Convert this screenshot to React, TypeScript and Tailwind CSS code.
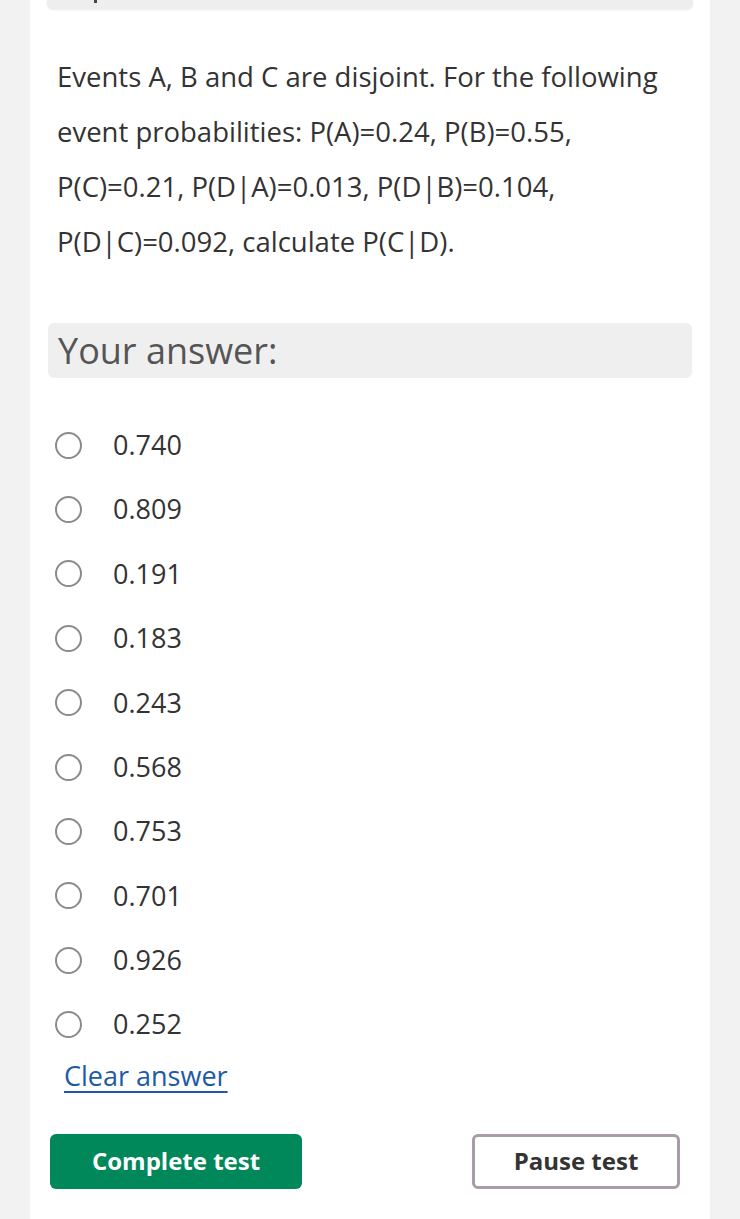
const OPTIONS = ["0.740", "0.809", "0.191", "0.183", "0.243", "0.568", "0.753", "0.701", "0.926", "0.252"];

const QUESTION = [
  "Events A, B and C are disjoint. For the following",
  "event probabilities: P(A)=0.24, P(B)=0.55,",
  "P(C)=0.21, P(D|A)=0.013, P(D|B)=0.104,",
  "P(D|C)=0.092, calculate P(C|D).",
];

export default function App() {
  return (
    <div className="min-h-[1219px] bg-[#f2f2f2] font-['Open_Sans',sans-serif]">
      <div className="mx-[30px] min-h-[1219px] bg-white">
        <div className="mx-[17px] h-[9px] rounded-b-md bg-[#eeeeee] shadow-[0_1px_2px_rgba(0,0,0,0.08)] relative">
          <span className="absolute left-[47px] top-0 h-[3px] w-[3px] bg-[#444]" />
        </div>

        <div className="px-[27px] pt-[40px] text-[27.5px] leading-[55px] text-[#333]">
          {QUESTION.map((l) => (
            <div key={l} className="whitespace-nowrap">{l}</div>
          ))}
        </div>

        <div className="mx-[18px] mt-[54px] flex h-[55px] items-center rounded-md bg-[#efefef] px-[10px] text-[36px] text-[#555]">
          Your answer:
        </div>

        <div className="mt-[35px] flex flex-col">
          {OPTIONS.map((o) => (
            <label key={o} className="flex h-[64.4px] items-center">
              <span className="ml-[25px] h-[27px] w-[27px] rounded-full border-[2.5px] border-[#8a8a8a]" />
              <span className="ml-[31px] text-[27px] text-[#333]">{o}</span>
            </label>
          ))}
        </div>

        <a className="ml-[34px] mt-[1px] block w-fit text-[27px] leading-[36px] text-[#1d5aa5] underline underline-offset-[5px] decoration-[1.5px]">
          Clear answer
        </a>

        <div className="mt-[40px] flex items-center justify-between pl-[20px] pr-[30px]">
          <button className="h-[55px] w-[252px] rounded-md bg-[#00875a] text-[24px] font-bold text-white">
            Complete test
          </button>
          <button className="h-[55px] w-[208px] rounded-md border-[3px] border-[#a99ca9] bg-white text-[24px] font-bold text-[#333]">
            Pause test
          </button>
        </div>
      </div>
    </div>
  );
}
